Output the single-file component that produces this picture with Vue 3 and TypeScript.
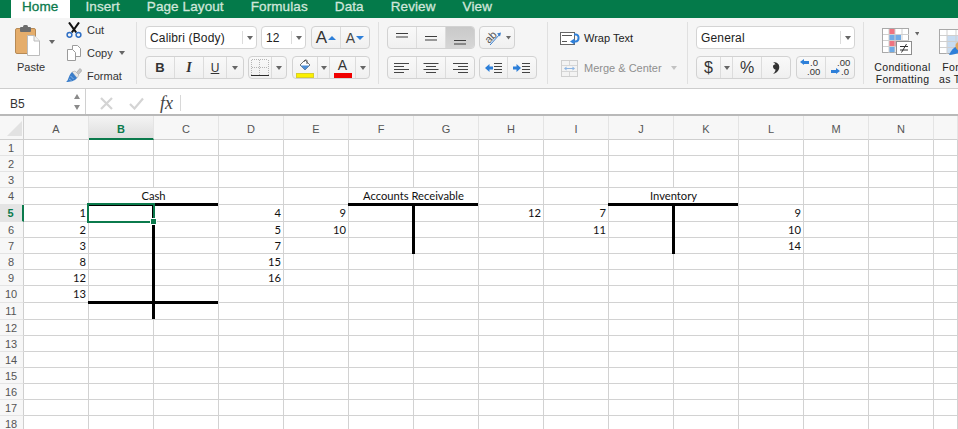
<script setup lang="ts">
import { computed } from 'vue'

interface Cell {
  key: string
  text: string
  span: number
  align: string
  classes: string[]
  selected: boolean
}

const columns = ['A', 'B', 'C', 'D', 'E', 'F', 'G', 'H', 'I', 'J', 'K', 'L', 'M', 'N', '']
const rowCount = 18

const values: Record<string, string> = {
  A5: '1', A6: '2', A7: '3', A8: '8', A9: '12', A10: '13',
  D5: '4', D6: '5', D7: '7', D8: '15', D9: '16',
  E5: '9', E6: '10',
  H5: '12',
  I5: '7', I6: '11',
  L5: '9', L6: '10', L7: '14',
}

const merged: Record<string, string> = {
  B4: 'Cash',
  F4: 'Accounts Receivable',
  J4: 'Inventory',
}
const mergedTails = ['C4', 'G4', 'K4']
const thickRight = ['B5', 'B6', 'B7', 'B8', 'B9', 'B10', 'B11', 'F5', 'F6', 'F7', 'J5', 'J6', 'J7']
const thickBottom = ['B10', 'C10']

const rows = computed(() => {
  const out: { label: number; cells: Cell[] }[] = []
  for (let r = 1; r <= rowCount; r++) {
    const cells: Cell[] = []
    for (const c of columns) {
      const id = `${c}${r}`
      if (!c) {
        cells.push({ key: `end${r}`, text: '', span: 1, align: '', classes: [], selected: false })
        continue
      }
      if (mergedTails.includes(id)) continue
      const isMerged = id in merged
      const classes: string[] = []
      if (isMerged) classes.push('thick-under')
      if (thickRight.includes(id)) classes.push('thick-right')
      if (thickBottom.includes(id)) classes.push('thick-bottom')
      if (id === 'B11') classes.push('thick-end')
      cells.push({
        key: id,
        text: isMerged ? merged[id] : values[id] ?? '',
        span: isMerged ? 2 : 1,
        align: isMerged ? 'center' : 'right',
        classes,
        selected: id === 'B5',
      })
    }
    out.push({ label: r, cells })
  }
  return out
})

const tabs = ['Home', 'Insert', 'Page Layout', 'Formulas', 'Data', 'Review', 'View']
</script>

<template>
  <div class="app">
    <nav class="tabs">
      <div v-for="(t, i) in tabs" :key="t" class="tab" :class="{ active: i === 0 }">{{ t }}</div>
    </nav>

    <section class="ribbon">
      <!-- Clipboard -->
      <div class="group clip">
        <div class="paste">
          <div class="paste-top">
            <svg width="25" height="31" viewBox="0 0 25 31">
              <rect x="0.5" y="3.5" width="20" height="25" rx="1.5" fill="#e5ad6b" stroke="#b78a55" />
              <rect x="5" y="2" width="11" height="5" rx="1" fill="#6d6d6d" />
              <rect x="8" y="0" width="5" height="4" rx="1.5" fill="#6d6d6d" />
              <path d="M12.5 10.5h6.5l5.5 5.5v14.5h-12z" fill="#fff" stroke="#bcbcbc" />
              <path d="M19 10.5v5.5h5.5" fill="#f1f1f1" stroke="#bcbcbc" />
            </svg>
            <i class="caret paste-caret"></i>
          </div>
          <span class="paste-label">Paste</span>
        </div>
        <div class="clip-list">
          <div class="clip-item">
            <svg width="16" height="16" viewBox="0 0 16 16">
              <path d="M3 0.500l7.200 10M13 0.500L5.800 10.500" stroke="#111" stroke-width="2.100" fill="none" />
              <circle cx="3.500" cy="12.800" r="2.400" fill="none" stroke="#2f6fc4" stroke-width="1.500" />
              <circle cx="12.500" cy="12.800" r="2.400" fill="none" stroke="#2f6fc4" stroke-width="1.500" />
            </svg>
            <span>Cut</span>
          </div>
          <div class="clip-item">
            <svg width="16" height="16" viewBox="0 0 16 16">
              <path d="M6.500 0.500h5l3 3v8h-8z" fill="#fff" stroke="#9b9b9b" />
              <path d="M1.500 4.500h5l3 3v8h-8z" fill="#fff" stroke="#9b9b9b" />
            </svg>
            <span>Copy</span>
            <i class="caret copy-caret"></i>
          </div>
          <div class="clip-item">
            <svg width="16" height="15" viewBox="0 0 16 15">
              <path d="M10 5l4-4.500 2 2-4 4.500z" fill="#c4c4c4" stroke="#999" stroke-width="0.600" />
              <path d="M6 4l3-1 4 4-2 3z" fill="#e8e8e8" stroke="#aaa" stroke-width="0.600" />
              <path d="M6 4l5 6c-2 3-7 4-11 4 3-2 2-6 6-10z" fill="#3a7dca" />
              <path d="M4.500 8l3 3M3 11l2.500 1.500" stroke="#a9c8ea" stroke-width="0.700" />
            </svg>
            <span>Format</span>
          </div>
        </div>
      </div>

      <!-- Font -->
      <div class="group font">
        <div class="row">
          <div class="select font-family"><span>Calibri (Body)</span><b class="select-arrow"><i class="caret"></i></b></div>
          <div class="select font-size"><span>12</span><b class="select-arrow"><i class="caret"></i></b></div>
          <div class="btns size-btns">
            <div class="btn grow">
              <span class="big-a">A</span><i class="tri up"></i>
            </div>
            <div class="btn shrink">
              <span class="small-a">A</span><i class="tri down"></i>
            </div>
          </div>
        </div>
        <div class="row">
          <div class="btns">
            <div class="btn w29 letter bold">B</div>
            <div class="btn w29 letter italic">I</div>
            <div class="btn w23 letter under">U</div>
            <div class="btn w16"><i class="caret"></i></div>
          </div>
          <div class="btns borders-btn">
            <div class="btn w23">
              <svg width="18" height="18" viewBox="0 0 18 18">
                <path d="M0.500 1v15M8.500 1v15M17.500 1v15M1 0.500h16M1 8.500h16" stroke="#b5b5b5" stroke-dasharray="1 1" fill="none" />
                <path d="M0 16.500h18" stroke="#2a2a2a" />
              </svg>
            </div>
            <div class="btn w14"><i class="caret"></i></div>
          </div>
          <div class="btns color-btns">
            <div class="btn w25 colour">
              <svg width="14" height="13" viewBox="0 0 14 13">
                <path d="M2 6l5-5 5 5-5 5z" fill="#fff" stroke="#777" />
                <path d="M2.500 6.500h9L7 11z" fill="#4d8fd8" />
                <path d="M6 3c0-2 3-3 3-1v3" fill="none" stroke="#555" />
              </svg>
              <i class="swatch yellow"></i>
            </div>
            <div class="btn w12"><i class="caret"></i></div>
            <div class="btn w26 colour">
              <span class="text-a">A</span>
              <i class="swatch red"></i>
            </div>
            <div class="btn w13"><i class="caret"></i></div>
          </div>
        </div>
      </div>

      <!-- Alignment -->
      <div class="group align">
        <div class="row">
          <div class="btns">
            <div class="btn w29">
              <svg width="14" height="16" viewBox="0 0 14 16"><path d="M1 3.500h12M1 7h12" stroke="#3d3d3d" /></svg>
            </div>
            <div class="btn w29">
              <svg width="14" height="16" viewBox="0 0 14 16"><path d="M1 6.500h12M1 10h12" stroke="#3d3d3d" /></svg>
            </div>
            <div class="btn w28 pressed">
              <svg width="14" height="16" viewBox="0 0 14 16"><path d="M1 10.500h12M1 14h12" stroke="#3d3d3d" /></svg>
            </div>
          </div>
          <div class="btns orient">
            <div class="btn w34">
              <svg width="32" height="20" viewBox="0 0 32 20">
                <text x="0" y="0" class="ab" transform="translate(8 16) rotate(-45)">ab</text>
                <path d="M9 17L19 6" stroke="#3a7dca" fill="none" />
                <path d="M20 4.500l-4 1 3 3z" fill="#3a7dca" />
                <path d="M25 8h5l-2.500 3.500z" fill="#6a6a6a" />
              </svg>
            </div>
          </div>
        </div>
        <div class="row">
          <div class="btns">
            <div class="btn w29">
              <svg width="16" height="12" viewBox="0 0 16 12"><path d="M0 1.500h15M0 4.500h10M0 7.500h15M0 10.500h10" stroke="#444" /></svg>
            </div>
            <div class="btn w29">
              <svg width="16" height="12" viewBox="0 0 16 12"><path d="M0.500 1.500h15M3 4.500h10M0.500 7.500h15M3 10.500h10" stroke="#444" /></svg>
            </div>
            <div class="btn w28">
              <svg width="16" height="12" viewBox="0 0 16 12"><path d="M1 1.500h15M6 4.500h10M1 7.500h15M6 10.500h10" stroke="#444" /></svg>
            </div>
          </div>
          <div class="btns orient">
            <div class="btn w28">
              <svg width="18" height="12" viewBox="0 0 18 12">
                <path d="M0 6l4.500-4v2.500H8v3H4.500V10z" fill="#2d7fd9" />
                <path d="M9 1.500h8M9 4.500h8M9 7.500h8M9 10.500h8" stroke="#444" />
              </svg>
            </div>
            <div class="btn w28">
              <svg width="18" height="12" viewBox="0 0 18 12">
                <path d="M8 6L3.500 2v2.500H0v3h3.500V10z" fill="#2d7fd9" />
                <path d="M9 1.500h8M9 4.500h8M9 7.500h8M9 10.500h8" stroke="#444" />
              </svg>
            </div>
          </div>
        </div>
      </div>

      <!-- Wrap and merge -->
      <div class="group wrap">
        <div class="wrap-item">
          <svg width="20" height="13" viewBox="0 0 20 13">
            <rect x="0.500" y="0.500" width="14" height="12" fill="#fff" stroke="#666" />
            <path d="M2 3.500h10M2 9.500h5" stroke="#555" />
            <path d="M14 2.500h2c3.500 0 3.500 7-.5 7h-2" fill="none" stroke="#2d7fd9" stroke-width="2" />
            <path d="M14.500 6.500v6l-4.500-3z" fill="#2d7fd9" />
          </svg>
          <span>Wrap Text</span>
        </div>
        <div class="wrap-item off">
          <svg width="17" height="17" viewBox="0 0 17 17">
            <rect x="0.500" y="0.500" width="16" height="16" fill="#f3f3f3" stroke="#cfcfcf" />
            <path d="M1 5.500h15M1 11.500h15M8.500 1v4M8.500 12v4" stroke="#d6d6d6" />
            <path d="M4 8.500h9" stroke="#8db5e3" />
            <path d="M3 8.500l2.500-2v4zM14 8.500l-2.500-2v4z" fill="#8db5e3" />
          </svg>
          <span>Merge &amp; Center</span>
          <i class="caret pale merge-caret"></i>
        </div>
      </div>

      <!-- Number -->
      <div class="group number">
        <div class="row">
          <div class="select number-format"><span>General</span><b class="select-arrow"><i class="caret"></i></b></div>
        </div>
        <div class="row">
          <div class="btns">
            <div class="btn w24 sym">$</div>
            <div class="btn w12"><i class="caret"></i></div>
            <div class="btn w29 sym">%</div>
            <div class="btn w28">
              <svg width="8" height="12" viewBox="0 0 8 12">
                <path d="M1 0c5 0 7 3 6 7-1 2.500-3 4.500-6 5 2-2 2.500-3 2.500-4.500C2 7.500 1 6 1 4.500 1 3 2 2.500 3.500 2.500 3 1.500 2 .500 1 0z" fill="#333" />
              </svg>
            </div>
          </div>
          <div class="btns">
            <div class="btn w29 dec">
              <i class="arrow-l"></i>
              <span class="dec-a">.0</span>
              <span class="dec-b">.00</span>
            </div>
            <div class="btn w28 dec">
              <i class="arrow-r"></i>
              <span class="dec-c">.00</span>
              <span class="dec-d">.0</span>
            </div>
          </div>
        </div>
      </div>

      <!-- Styles -->
      <div class="group styles">
        <div class="style-item conditional">
          <div class="style-icon">
            <svg width="37" height="28" viewBox="0 0 37 28">
              <rect x="0.500" y="0.500" width="26" height="24" fill="#fff" stroke="#a9a9a9" />
              <rect x="7" y="1" width="6" height="5" fill="#ef7480" />
              <rect x="7" y="6" width="12" height="6" fill="#70abe6" />
              <rect x="7" y="12" width="13" height="6" fill="#ef7480" />
              <rect x="7" y="18" width="6" height="6" fill="#70abe6" />
              <path d="M7 1v24M13 1v24M20 1v24M1 6.500h26M1 12.500h26M1 18.500h26" stroke="#cfcfcf" fill="none" />
              <rect x="14.500" y="13.500" width="15" height="13" fill="#fff" stroke="#8d8d8d" />
              <path d="M18 18.500h8M18 22h8M24.500 16l-5 8.500" stroke="#333" fill="none" />
              <path d="M33 4h4.500l-2.250 3.500z" fill="#666" />
            </svg>
          </div>
          <span>Conditional<br />Formatting</span>
        </div>
        <div class="style-item table-format">
          <div class="style-icon">
            <svg width="30" height="28" viewBox="0 0 30 28">
              <rect x="0.500" y="1.500" width="26" height="24" fill="#fff" stroke="#a9a9a9" />
              <rect x="8" y="7" width="18" height="18" fill="#c7dcf2" />
              <path d="M8 2v24M17 2v24M1 7.500h26M1 13.500h26M1 19.500h26" stroke="#cfcfcf" fill="none" />
              <path d="M10 27c2-5 5-8 9-9l3 4c-2 3-6 5-12 5z" fill="#2d7fd9" />
              <circle cx="21" cy="18" r="4.500" fill="#e0a55f" />
            </svg>
          </div>
          <span>Format<br />as Table</span>
        </div>
      </div>
    </section>

    <section class="formula">
      <div class="name-box">
        <span>B5</span>
        <div class="stepper"><i class="tri-up"></i><i class="tri-down"></i></div>
      </div>
      <div class="formula-actions">
        <svg width="13" height="13" viewBox="0 0 13 13"><path d="M1 1l11 11M12 1L1 12" stroke="#d4d4d4" stroke-width="2.200" /></svg>
        <svg width="15" height="13" viewBox="0 0 15 13"><path d="M1 7l4.500 4.500L14 1.500" stroke="#d4d4d4" stroke-width="2.200" fill="none" /></svg>
        <span class="fx">fx</span>
      </div>
    </section>

    <section class="sheet">
      <div class="corner"><i></i></div>
      <div v-for="c in columns" :key="'h' + c" class="col-head" :class="{ current: c === 'B' }">{{ c }}</div>
      <template v-for="r in rows" :key="r.label">
        <div class="row-head" :class="{ current: r.label === 5 }">{{ r.label }}</div>
        <div
          v-for="cell in r.cells"
          :key="cell.key"
          class="cell"
          :class="[cell.align, ...cell.classes, { span2: cell.span === 2 }]"
        >
          {{ cell.text }}
          <template v-if="cell.selected">
            <span class="selection"></span>
            <span class="handle"></span>
          </template>
        </div>
      </template>
    </section>
  </div>
</template>

<style scoped>
.app {
  width: 958px;
  height: 429px;
  overflow: hidden;
  background: #fff;
  font-family: "Liberation Sans", Arial, sans-serif;
  font-size: 11px;
  color: #222;
}
i { display: block; font-style: normal; }

.tabs {
  display: flex;
  height: 18px;
  padding-left: 11px;
  background: #047a4a;
}
.tab {
  padding: 0 13.500px;
  font-size: 13.500px;
  font-weight: 400;
  line-height: 13px;
  color: #cfe6da;
  -webkit-text-stroke: 0.300px #cfe6da;
  letter-spacing: 0.100px;
}
.tab.active {
  padding: 0 12px 0 11px;
  margin-right: 1.500px;
  background: #fff;
  color: #0b7a4c;
  -webkit-text-stroke: 0.300px #0b7a4c;
}

.ribbon {
  display: flex;
  height: 71px;
  padding-top: 4px;
  box-sizing: border-box;
  background: #f5f5f5;
  border-bottom: 1px solid #cdcdcd;
}
.group {
  height: 62px;
  box-sizing: border-box;
  border-right: 1px solid #e0e0e0;
  flex: none;
}
.font, .align, .number {
  display: flex;
  flex-direction: column;
  gap: 7px;
  padding: 4px 0 0 8px;
}
.row { display: flex; gap: 5px; height: 23px; }

.clip { width: 137px; display: flex; }
.paste { width: 64px; padding-left: 15px; box-sizing: border-box; }
.paste-top { display: flex; height: 32px; margin-top: 3px; }
.paste-caret { margin: 15px 0 0 9px; }
.paste-label { display: block; margin: 4px 0 0 2px; font-size: 11px; line-height: 13px; color: #333; }
.clip-list { margin-top: -4px; display: flex; flex-direction: column; }
.clip-item { display: flex; align-items: center; flex: none; height: 23px; gap: 5px; margin-left: 2px; color: #333; position: relative; }
.clip-item svg { flex: none; width: 16px; }
.copy-caret { margin-left: 1px; }

.font { width: 242px; }
.align { width: 169px; }
.number { width: 176px; }
.align .row { gap: 4px; }
.borders-btn { margin-left: -1px; }

.select {
  display: flex;
  justify-content: space-between;
  align-items: center;
  height: 23px;
  box-sizing: border-box;
  border: 1px solid #d4d4d4;
  border-radius: 4px;
  background: #fff;
  padding-left: 4px;
  font-size: 12px;
  letter-spacing: 0.150px;
  color: #222;
}
.font-family { width: 112px; margin-right: -1px; }
.font-size { width: 45px; }
.number-format { width: 159px; }
.select-arrow {
  display: flex;
  align-items: center;
  justify-content: center;
  width: 13px;
  height: 13px;
  border-left: 1px solid #dcdcdc;
}
.caret {
  width: 0;
  height: 0;
  border-left: 3px solid transparent;
  border-right: 3px solid transparent;
  border-top: 4px solid #666;
}
.caret.pale { border-top-color: #c2c2c2; }

.btns {
  display: inline-flex;
  height: 23px;
  box-sizing: border-box;
  border: 1px solid #d2d2d2;
  border-radius: 4px;
  background: linear-gradient(#f9f9f9, #f0f0f0);
  overflow: hidden;
}
.btn {
  display: flex;
  align-items: center;
  justify-content: center;
  box-sizing: border-box;
  height: 21px;
  border-right: 1px solid #dcdcdc;
  flex: none;
  position: relative;
}
.btn:last-child { border-right: 0; }
.w12 { width: 12px; }
.w13 { width: 13px; }
.w14 { width: 14px; }
.w16 { width: 16px; }
.w23 { width: 23px; }
.w24 { width: 24px; }
.w25 { width: 25px; }
.w26 { width: 26px; }
.w28 { width: 28px; }
.w29 { width: 29px; }
.w34 { width: 34px; }
.pressed { background: linear-gradient(#c9c9c9, #d6d6d6); }

.grow { width: 29px; gap: 1px; }
.shrink { width: 28px; gap: 1px; }
.big-a { font-size: 17px; color: #333; font-weight: 400; }
.small-a { font-size: 14px; color: #444; }
.tri { width: 0; height: 0; border-left: 4px solid transparent; border-right: 4px solid transparent; }
.tri.up { border-bottom: 4px solid #2d7fd9; }
.tri.down { border-top: 4px solid #2d7fd9; }

.letter { font-size: 13px; color: #333; }
.bold { font-weight: 700; }
.italic { font-family: "Liberation Serif", serif; font-style: italic; font-weight: 700; font-size: 14px; }
.under { text-decoration: underline; font-size: 12px; }

.colour { flex-direction: column; justify-content: flex-start; padding-top: 2px; gap: 1px; }
.swatch { width: 18px; height: 5px; }
.yellow { background: #fbf000; border: 1px solid #d8cf2a; box-sizing: border-box; }
.red { background: #f00000; }
.text-a { font-size: 14px; line-height: 13px; color: #333; }

.ab { font-family: "Liberation Sans", sans-serif; font-size: 11px; fill: #555; }

.wrap { width: 140px; padding: 3px 0 0 13px; }
.wrap-item { display: flex; align-items: center; height: 26px; gap: 4px; margin-left: -1px; font-size: 11px; color: #222; }
.wrap-item.off { height: 34px; margin-left: 0; color: #8f8f8f; gap: 6px; }
.merge-caret { margin-left: 3px; }
.wrap-item svg { flex: none; }

.sym { font-size: 16px; color: #333; }
.dec { position: relative; font-size: 9.500px; line-height: 9px; color: #333; }
.dec span { position: absolute; }
.dec-a { left: 13px; top: 1px; }
.dec-b { left: 10px; top: 10px; }
.dec-c { left: 11px; top: 1px; }
.dec-d { left: 15px; top: 10px; }
.arrow-l, .arrow-r { position: absolute; width: 5px; height: 3px; background: #2d7fd9; }
.arrow-l { left: 7px; top: 4px; }
.arrow-r { left: 5px; top: 13px; }
.arrow-l::before, .arrow-r::before {
  content: "";
  position: absolute;
  top: -2px;
  width: 0;
  height: 0;
  border-top: 3.500px solid transparent;
  border-bottom: 3.500px solid transparent;
}
.arrow-l::before { left: -4px; border-right: 4px solid #2d7fd9; }
.arrow-r::before { left: 5px; border-left: 4px solid #2d7fd9; }

.styles { display: flex; border-right: 0; padding-left: 9px; }
.style-item { text-align: center; line-height: 12px; color: #222; font-size: 10.500px; letter-spacing: 0.350px; }
.style-icon { display: flex; height: 34px; padding-top: 6px; box-sizing: border-box; }
.style-item > span { display: block; margin-top: 5px; white-space: nowrap; }
.conditional { width: 59px; }
.conditional .style-icon { padding-left: 9px; }
.table-format { margin-left: 7px; }

.formula {
  display: flex;
  height: 27px;
  box-sizing: border-box;
  background: #fff;
  border-bottom: 2px solid #b9b9b9;
}
.name-box {
  position: relative;
  width: 86px;
  box-sizing: border-box;
  border-right: 1px solid #d0d0d0;
  padding: 8px 0 0 10px;
  font-size: 12px;
  color: #333;
}
.stepper {
  position: absolute;
  right: 5px;
  top: 5px;
  display: flex;
  flex-direction: column;
  gap: 6px;
}
.tri-up, .tri-down { width: 0; height: 0; border-left: 3.500px solid transparent; border-right: 3.500px solid transparent; }
.tri-up { border-bottom: 5px solid #8a8a8a; }
.tri-down { border-top: 5px solid #8a8a8a; }
.formula-actions {
  display: flex;
  align-items: center;
  width: 95px;
  height: 16px;
  margin-top: 6px;
  padding-left: 14px;
  box-sizing: border-box;
  border-right: 1px solid #d8d8d8;
}
.formula-actions svg:nth-child(2) { margin-left: 16px; }
.fx {
  margin-left: 16px;
  font-family: "Liberation Serif", serif;
  font-style: italic;
  font-size: 18px;
  color: #444;
}

.sheet {
  display: grid;
  grid-template-columns: 24px repeat(14, 65px) 1fr;
  grid-template-rows: 24px 16px 16px 16px 17px 17px 16px 16px 16px 16px 17px 17px 16px 16px 16px 16px 16px 16px 16px;
  font-family: Lato, "Liberation Sans", sans-serif;
  font-size: 11.200px;
  color: #111;
}
.corner {
  position: relative;
  background: #f7f7f7;
  border-right: 1px solid #cfcfcf;
  border-bottom: 1px solid #cfcfcf;
}
.corner i {
  position: absolute;
  left: 7px;
  top: 5px;
  width: 15px;
  height: 15px;
  background: #e2e2e2;
  clip-path: polygon(100% 0, 100% 100%, 0 100%);
}
.col-head {
  display: flex;
  align-items: center;
  justify-content: center;
  padding-top: 3px;
  box-sizing: border-box;
  background: #f7f7f7;
  border-right: 1px solid #e4e4e4;
  border-bottom: 1px solid #cfcfcf;
  font-family: "Liberation Sans", sans-serif;
  font-size: 11px;
  color: #555;
}
.col-head.current {
  background: linear-gradient(#f4f4f4, #dedede);
  border-bottom: 2px solid #0b7a4c;
  color: #0b7a4c;
  font-weight: 700;
}
.row-head {
  display: flex;
  align-items: center;
  justify-content: center;
  box-sizing: border-box;
  padding-right: 1px;
  background: #f7f7f7;
  border-right: 1px solid #cfcfcf;
  border-bottom: 1px solid #e4e4e4;
  font-family: "Liberation Sans", sans-serif;
  font-size: 11px;
  color: #555;
}
.row-head.current {
  background: #e4e4e4;
  border-right: 2px solid #0b7a4c;
  color: #0b7a4c;
  font-weight: 700;
}
.cell {
  position: relative;
  box-sizing: border-box;
  min-width: 0;
  border-right: 1px solid #d2d2d2;
  border-bottom: 1px solid #d2d2d2;
  padding: 0 2px;
  line-height: 16px;
  white-space: nowrap;
}
.cell.right { text-align: right; }
.cell.center { text-align: center; }
.span2 { grid-column: span 2; }

.thick-right::after {
  content: "";
  position: absolute;
  z-index: 1;
  top: -1px;
  bottom: -1px;
  right: -2px;
  width: 3px;
  background: #000;
}
.thick-end::after { bottom: 0; }
.thick-under::after, .thick-bottom::before {
  content: "";
  position: absolute;
  z-index: 1;
  left: -1px;
  right: 0;
  bottom: -2px;
  height: 3px;
  background: #000;
}
.selection {
  position: absolute;
  z-index: 2;
  left: -2px;
  right: -2px;
  top: -2px;
  bottom: -2px;
  border: 2px solid #0b7a4c;
}
.handle {
  position: absolute;
  z-index: 3;
  right: -3px;
  bottom: -3px;
  width: 5px;
  height: 5px;
  background: #0b7a4c;
  outline: 1px solid #fff;
}
</style>
